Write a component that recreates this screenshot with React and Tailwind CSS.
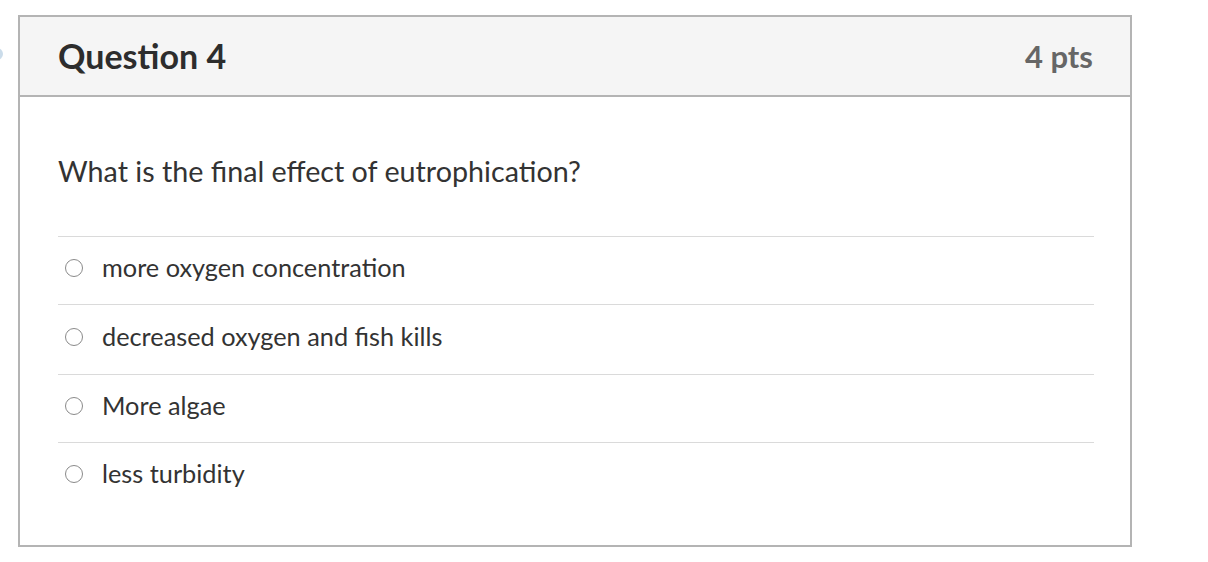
import React from "react";

const options = [
  "more oxygen concentration",
  "decreased oxygen and fish kills",
  "More algae",
  "less turbidity",
];

export default function App() {
  return (
    <div
      className="relative w-[1208px] h-[562px] bg-white overflow-hidden"
      style={{ fontFamily: "Lato, 'Noto Sans', sans-serif" }}
    >
      <div className="absolute left-[-9px] top-[48px] w-[12px] h-[12px] rounded-full bg-[#a9c4dc] opacity-60" />
      <div className="pt-[15px] pl-[18px]">
        <div className="w-[1114px] h-[532px] border-2 border-[#b4b4b4] flex flex-col">
          <div className="h-[80px] bg-[#f5f5f5] border-b-2 border-[#b4b4b4] flex items-center justify-between pl-[38px] pr-[37px]">
            <div className="text-[34px] font-bold text-[#2d2d2d] leading-none">Question 4</div>
            <div className="text-[31px] font-bold text-[#666666] leading-none">4 pts</div>
          </div>
          <div className="pl-[38px] pr-[36px]">
            <div className="h-[139px] flex items-center pt-[11px] text-[28.7px] text-[#333333]">
              What is the final effect of eutrophication?
            </div>
            {options.map((o, i) => (
              <div
                key={i}
                className={`flex items-center border-t border-[#dadada] pb-[6px] ${i === 1 ? "h-[70px]" : "h-[68px]"}`}
              >
                <div className="w-[18px] h-[18px] rounded-full border-[1.5px] border-[#8a8a8a] ml-[7px] mr-[19px] bg-white" />
                <div className="text-[25.3px] text-[#333333] leading-none">{o}</div>
              </div>
            ))}
          </div>
        </div>
      </div>
    </div>
  );
}
